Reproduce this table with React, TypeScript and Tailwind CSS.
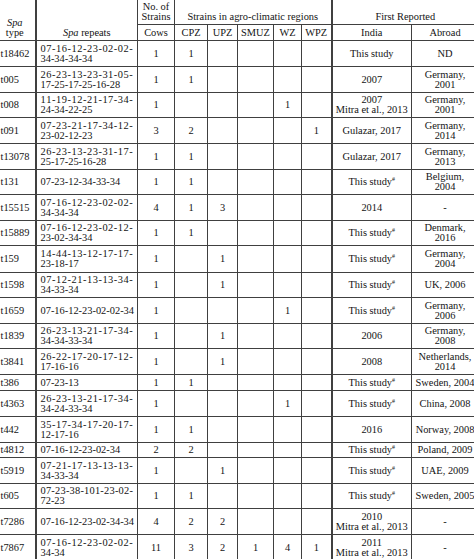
type Row = {
    type: string;
    repeats: string[];
    cows: string;
    zones: string[]; // CPZ, UPZ, SMUZ, WZ, WPZ
    india: string[];
    star?: boolean;
    abroad: string[];
    h: string;
};

const rows: Row[] = [
    { h: "h-[26px]", type: "t18462", repeats: ["07-16-12-23-02-02-", "34-34-34-34"], cows: "1", zones: ["1", "", "", "", ""], india: ["This study"], abroad: ["ND"] },
    { h: "h-[26px]", type: "t005", repeats: ["26-23-13-23-31-05-", "17-25-17-25-16-28"], cows: "1", zones: ["1", "", "", "", ""], india: ["2007"], abroad: ["Germany,", "2001"] },
    { h: "h-[25px]", type: "t008", repeats: ["11-19-12-21-17-34-", "24-34-22-25"], cows: "1", zones: ["", "", "", "1", ""], india: ["2007", "Mitra et al., 2013"], abroad: ["Germany,", "2001"] },
    { h: "h-[26px]", type: "t091", repeats: ["07-23-21-17-34-12-", "23-02-12-23"], cows: "3", zones: ["2", "", "", "", "1"], india: ["Gulazar, 2017"], abroad: ["Germany,", "2014"] },
    { h: "h-[26px]", type: "t13078", repeats: ["26-23-13-23-31-17-", "25-17-25-16-28"], cows: "1", zones: ["1", "", "", "", ""], india: ["Gulazar, 2017"], abroad: ["Germany,", "2013"] },
    { h: "h-[25px]", type: "t131", repeats: ["07-23-12-34-33-34"], cows: "1", zones: ["1", "", "", "", ""], india: ["This study"], star: true, abroad: ["Belgium,", "2004"] },
    { h: "h-[26px]", type: "t15515", repeats: ["07-16-12-23-02-02-", "34-34-34"], cows: "4", zones: ["1", "3", "", "", ""], india: ["2014"], abroad: ["-"] },
    { h: "h-[25px]", type: "t15889", repeats: ["07-16-12-23-02-12-", "23-02-34-34"], cows: "1", zones: ["1", "", "", "", ""], india: ["This study"], star: true, abroad: ["Denmark,", "2016"] },
    { h: "h-[27px]", type: "t159", repeats: ["14-44-13-12-17-17-", "23-18-17"], cows: "1", zones: ["", "1", "", "", ""], india: ["This study"], star: true, abroad: ["Germany,", "2004"] },
    { h: "h-[25px]", type: "t1598", repeats: ["07-12-21-13-13-34-", "34-33-34"], cows: "1", zones: ["", "1", "", "", ""], india: ["This study"], star: true, abroad: ["UK, 2006"] },
    { h: "h-[26px]", type: "t1659", repeats: ["07-16-12-23-02-02-34"], cows: "1", zones: ["", "", "", "1", ""], india: ["This study"], star: true, abroad: ["Germany,", "2006"] },
    { h: "h-[25px]", type: "t1839", repeats: ["26-23-13-21-17-34-", "34-34-33-34"], cows: "1", zones: ["", "1", "", "", ""], india: ["2006"], abroad: ["Germany,", "2008"] },
    { h: "h-[26px]", type: "t3841", repeats: ["26-22-17-20-17-12-", "17-16-16"], cows: "1", zones: ["", "1", "", "", ""], india: ["2008"], abroad: ["Netherlands,", "2014"] },
    { h: "h-[16px]", type: "t386", repeats: ["07-23-13"], cows: "1", zones: ["1", "", "", "", ""], india: ["This study"], star: true, abroad: ["Sweden, 2004"] },
    { h: "h-[26px]", type: "t4363", repeats: ["26-23-13-21-17-34-", "34-24-33-34"], cows: "1", zones: ["", "", "", "1", ""], india: ["This study"], star: true, abroad: ["China, 2008"] },
    { h: "h-[26px]", type: "t442", repeats: ["35-17-34-17-20-17-", "12-17-16"], cows: "1", zones: ["1", "", "", "", ""], india: ["2016"], abroad: ["Norway, 2008"] },
    { h: "h-[15px]", type: "t4812", repeats: ["07-16-12-23-02-34"], cows: "2", zones: ["2", "", "", "", ""], india: ["This study"], star: true, abroad: ["Poland, 2009"] },
    { h: "h-[26px]", type: "t5919", repeats: ["07-21-17-13-13-13-", "34-33-34"], cows: "1", zones: ["", "1", "", "", ""], india: ["This study"], star: true, abroad: ["UAE, 2009"] },
    { h: "h-[25px]", type: "t605", repeats: ["07-23-38-101-23-02-", "72-23"], cows: "1", zones: ["1", "", "", "", ""], india: ["This study"], star: true, abroad: ["Sweden, 2005"] },
    { h: "h-[26px]", type: "t7286", repeats: ["07-16-12-23-02-34-34"], cows: "4", zones: ["2", "2", "", "", ""], india: ["2010", "Mitra et al., 2013"], abroad: ["-"] },
    { h: "h-[26px]", type: "t7867", repeats: ["07-16-12-23-02-02-", "34-34"], cows: "11", zones: ["3", "2", "1", "4", "1"], india: ["2011", "Mitra et al., 2013"], abroad: ["-"] },
];

const cell = "border border-[#404040] px-[3px] py-0 leading-[10px] whitespace-nowrap";

// first line of a wrapped repeat is justified in the print, so spread its characters
function Repeats({ lines }: { lines: string[] }) {
    if (lines.length === 1) return <div>{lines[0]}</div>;
    return (
        <div>
            <div className="flex justify-between">
                {lines[0].split("").map((ch, i) => (
                    <span key={i}>{ch}</span>
                ))}
            </div>
            <div>{lines[1]}</div>
        </div>
    );
}

export default function App() {
    return (
        <div className="w-[474px] h-[559px] overflow-hidden bg-white text-[#141414] font-['Liberation_Serif','Times_New_Roman',serif] text-[10.4px]">
            <table className="table-fixed border-collapse w-[484px] -ml-[6px] -mt-px">
                <colgroup>
                    <col className="w-[41px]" />
                    <col className="w-[102px]" />
                    <col className="w-[37px]" />
                    <col className="w-[33px]" />
                    <col className="w-[30px]" />
                    <col className="w-[36px]" />
                    <col className="w-[28px]" />
                    <col className="w-[30px]" />
                    <col className="w-[80px]" />
                    <col className="w-[67px]" />
                </colgroup>
                <thead>
                    <tr className="h-[25px]">
                        <th rowSpan={2} className={`${cell} pb-[2px] border-r-2 font-normal text-center align-bottom`}>
                            <i>Spa</i>
                            <br />
                            type
                        </th>
                        <th rowSpan={2} className={`${cell} pb-[2px] font-normal text-center align-bottom`}>
                            <i>Spa</i> repeats
                        </th>
                        <th className={`${cell} pb-[2px] font-normal text-center align-bottom`}>
                            No. of
                            <br />
                            Strains
                        </th>
                        <th colSpan={5} className={`${cell} pb-[2px] border-r-2 font-normal text-center align-bottom`}>
                            Strains in agro-climatic regions
                        </th>
                        <th colSpan={2} className={`${cell} pb-[2px] font-normal text-center align-bottom`}>
                            First Reported
                        </th>
                    </tr>
                    <tr className="h-[16px]">
                        {["Cows", "CPZ", "UPZ", "SMUZ", "WZ", "WPZ", "India", "Abroad"].map((h) => (
                            <th key={h} className={`${cell} font-normal text-center ${h === "WPZ" ? "border-r-2" : ""}`}>
                                {h}
                            </th>
                        ))}
                    </tr>
                </thead>
                <tbody>
                    {rows.map((r) => (
                        <tr key={r.type} className={r.h}>
                            <td className={`${cell} border-r-2 text-left pl-[5.5px] align-middle`}>{r.type}</td>
                            <td className={`${cell} text-left pl-[4px] pr-[4px] align-middle`}>
                                <Repeats lines={r.repeats} />
                            </td>
                            <td className={`${cell} text-center align-middle`}>{r.cows}</td>
                            {r.zones.map((z, i) => (
                                <td key={i} className={`${cell} text-center align-middle ${i === 4 ? "border-r-2" : ""}`}>
                                    {z}
                                </td>
                            ))}
                            <td className={`${cell} text-center align-middle`}>
                                {r.india.map((t, i) => (
                                    <div key={i}>
                                        {t}
                                        {r.star && <span className="align-super text-[6px] leading-[0]">#</span>}
                                    </div>
                                ))}
                            </td>
                            <td className={`${cell} text-center align-middle`}>
                                {r.abroad.map((t, i) => (
                                    <div key={i}>{t}</div>
                                ))}
                            </td>
                        </tr>
                    ))}
                </tbody>
            </table>
        </div>
    );
}
